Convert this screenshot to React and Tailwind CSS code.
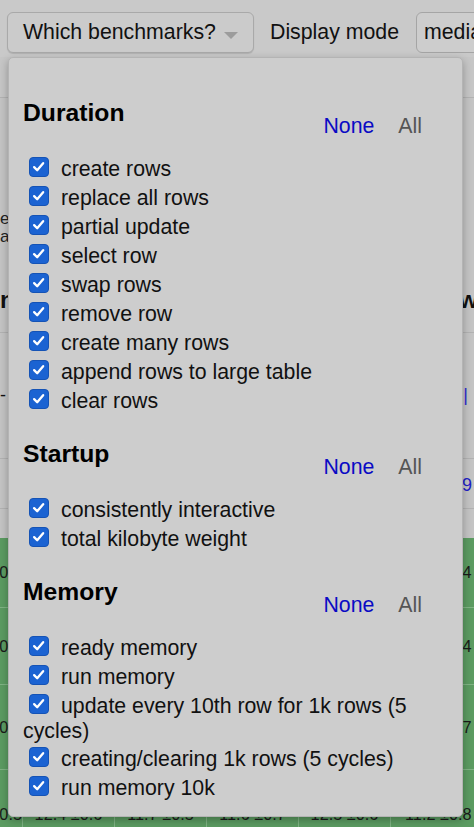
import React from "react";

const sections = [
  {
    title: "Duration",
    items: [
      "create rows",
      "replace all rows",
      "partial update",
      "select row",
      "swap rows",
      "remove row",
      "create many rows",
      "append rows to large table",
      "clear rows",
    ],
  },
  {
    title: "Startup",
    items: ["consistently interactive", "total kilobyte weight"],
  },
  {
    title: "Memory",
    items: [
      "ready memory",
      "run memory",
      "update every 10th row for 1k rows (5 cycles)",
      "creating/clearing 1k rows (5 cycles)",
      "run memory 10k",
    ],
  },
];

const greenRows = [
  { h: "h-[70px]", cells: ["±0.4", "12.1 ±0.4", "11.9 ±0.3", "12.0 ±0.5", "12.2 ±0.4", "11.8 ±0.4"] },
  { h: "h-[77px]", cells: ["±0.2", "12.3 ±0.5", "11.6 ±0.4", "11.9 ±0.4", "12.4 ±0.6", "11.5 ±0.4"] },
  { h: "h-[85px]", cells: ["±0.2", "12.0 ±0.6", "11.8 ±0.3", "11.7 ±0.5", "12.1 ±0.5", "11.4 ±0.7"] },
  { h: "h-[90px]", cells: ["±0.5", "12.4 ±0.6", "11.7 ±0.5", "11.6 ±0.7", "12.5 ±0.6", "11.2 ±0.8"] },
];

function Checkbox() {
  return (
    <span className="inline-block align-baseline w-5 h-5 ml-[6px] mr-[12px] mb-[-0.6px] rounded-[4px] bg-[#1b63d2] border border-[#1553b5]">
      <svg viewBox="0 0 20 20" className="w-full h-full">
        <path
          d="M4.6 10.2 L8 13.6 L14.6 5.8"
          fill="none"
          stroke="#ffffff"
          strokeWidth="2.6"
          strokeLinecap="round"
          strokeLinejoin="round"
        />
      </svg>
    </span>
  );
}

function Section({ title, items, first }) {
  return (
    <div className={first ? "" : "mt-[26.5px]"}>
      <div className="flex items-start justify-between mb-[14.2px]">
        <h3 className="text-[24.7px] leading-[28px] font-bold text-black">{title}</h3>
        <div className="flex gap-[24px] mt-[14.9px] mr-[25px] text-[21.3px] leading-[24.5px]">
          <span className="text-[#0a0ac4]">None</span>
          <span className="text-[#555555]">All</span>
        </div>
      </div>
      {items.map((item) => (
        <div key={item} className="pt-[4.1px] text-[21.3px] leading-[24.5px] text-[#111111]">
          <Checkbox />
          {item}
        </div>
      ))}
    </div>
  );
}

export default function App() {
  return (
    <div
      className="relative w-[474px] h-[827px] overflow-hidden bg-[#c4c4c4] text-[#111111]"
      style={{ fontFamily: '"Liberation Sans", Arial, sans-serif' }}
    >
      {/* top bar */}
      <div className="h-[57px] bg-[#c9c9c9] flex items-start pt-[12px] pl-[7px] whitespace-nowrap overflow-hidden">
        <button className="h-[41px] w-[247px] shrink-0 flex items-center pl-[15px] rounded-[6px] border border-[#a9a9a9] bg-[#cbcbcb] shadow-[0_1px_1px_rgba(0,0,0,0.12)] text-[21.3px] text-[#111111]">
          Which benchmarks?
          <svg viewBox="0 0 14 7" className="w-[14px] h-[7px] ml-[8px] mt-[5px]">
            <path d="M0 0 L14 0 L7 7 Z" fill="#9c9c9c" />
          </svg>
        </button>
        <span className="ml-[16px] mt-[7px] text-[21.3px] leading-[26px] shrink-0">Display mode</span>
        <div className="ml-[17px] h-[41px] w-[120px] shrink-0 flex items-center pl-[7px] rounded-[6px] border border-[#a5a5a5] bg-[#cdcdcd] text-[21.3px]">
          median
        </div>
      </div>

      {/* page content behind the menu */}
      <div className="h-[41px] border-b border-[#b2b2b2] bg-[#c6c6c6]" />
      <div className="h-[235px] border-b border-[#b2b2b2] flex flex-col">
        <div className="mt-[112px] text-[17px] leading-[18px] text-[#222222]">e</div>
        <div className="text-[17px] leading-[18px] text-[#222222]">a</div>
        <div className="mt-[40px] flex justify-between text-[24px] font-bold leading-[28px]">
          <span>n</span>
          <span className="mr-[-4px]">w</span>
        </div>
      </div>
      <div className="h-[126px] border-b border-[#b2b2b2] flex justify-between items-center">
        <span className="text-[18px]">-</span>
        <span className="text-[18px] text-[#2b2bd0] mr-[6px]">|</span>
      </div>
      <div className="h-[50px] border-b border-[#b2b2b2] flex justify-end items-center pt-[4px]">
        <span className="text-[18px] text-[#2020c8] mr-[2px]">9</span>
      </div>
      <div className="h-[29px]" />
      <div className="bg-[#5b9b61]">
        {greenRows.map((row, i) => (
          <div
            key={i}
            className={`${row.h} grid grid-cols-[23px_repeat(5,92px)_1fr] border-b border-[#7fb384]`}
          >
            {row.cells.map((c, j) => (
              <div
                key={j}
                className={`flex items-center text-[16.3px] text-[#1a1a1a] whitespace-nowrap overflow-hidden border-r border-[#7fb384] ${
                  j === 0 ? "justify-end" : j === 5 ? "justify-start pl-[14px]" : "justify-center"
                }`}
              >
                {c}
              </div>
            ))}
          </div>
        ))}
      </div>

      {/* benchmark menu */}
      <div className="absolute left-[8px] top-[57px] w-[455px] rounded-[5px] bg-[#cdcdcd] border border-[#b4b4b4] shadow-[0_3px_8px_rgba(0,0,0,0.28)] pt-[41px] pb-[15px] pl-[14px] pr-[15px]">
        {sections.map((s, i) => (
          <Section key={s.title} title={s.title} items={s.items} first={i === 0} />
        ))}
      </div>
    </div>
  );
}
